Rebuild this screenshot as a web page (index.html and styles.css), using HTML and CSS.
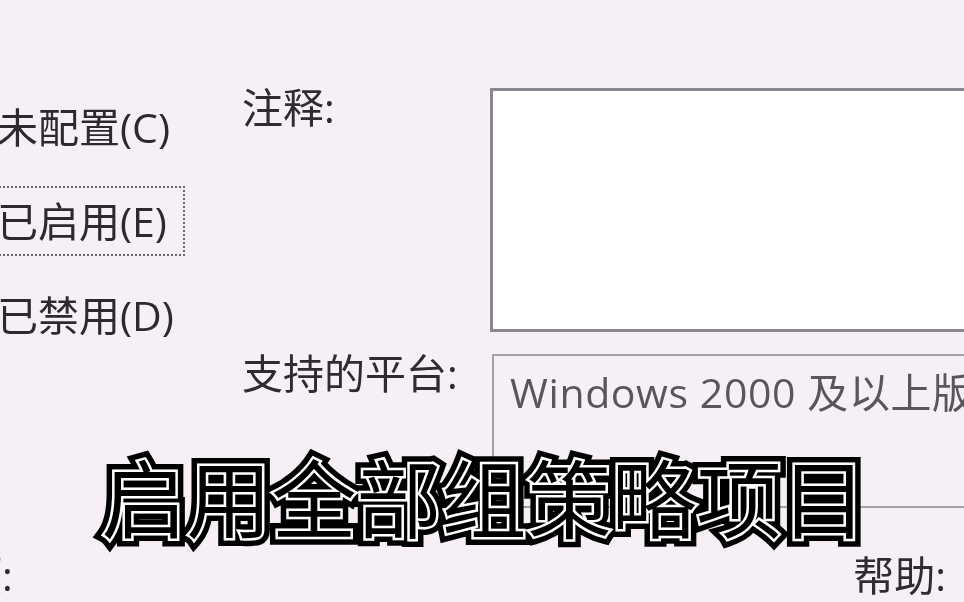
FILE: index.html
```html
<!DOCTYPE html>
<html lang="zh-CN">
<head>
<meta charset="utf-8">
<title>组策略设置</title>
<link rel="stylesheet" href="styles.css">
</head>
<body>
<div class="page">
  <div class="main">
    <div class="radios">
      <div class="radio r1">未配置(C)</div>
      <div class="radio focus">已启用(E)</div>
      <div class="radio r3">已禁用(D)</div>
    </div>
    <div class="fields">
      <div class="label">注释:</div>
      <div class="comment-box"></div>
      <div class="label">支持的平台:</div>
      <div class="platform-box">Windows 2000 及以上版本</div>
    </div>
  </div>
  <div class="bottom">
    <div class="label opt">选项:</div>
    <div class="label help">帮助:</div>
  </div>
  <div class="subtitle" data-text="启用全部组策略项目"><span class="subtitle-text">启用全部组策略项目</span></div>
</div>
</body>
</html>
```

FILE: styles.css
```css
html, body {
  margin: 0;
  padding: 0;
  background: #f6f0f6;
}

.page {
  position: relative;
  width: 964px;
  height: 602px;
  overflow: hidden;
  background: #f6f0f6;
  font-family: "Open Sans", "Noto Sans CJK SC", sans-serif;
  color: #2c2a2e;
}

.main {
  display: flex;
  filter: blur(0.6px);
}

.radios {
  width: 242px;
  flex: none;
  display: flex;
  flex-direction: column;
  padding-top: 103px;
}

.radio {
  font-size: 41px;
  line-height: 48px;
  height: 48px;
  margin-left: -3px;
  white-space: nowrap;
}

.radio.focus {
  margin-top: 35px;
  margin-left: -10px;
  width: 195px;
  height: 70px;
  box-sizing: border-box;
  border: 2px dotted #6a686c;
  border-left: none;
  padding-left: 7px;
  display: flex;
  align-items: center;
}

.radio.r3 {
  margin-top: 35px;
}

.fields {
  display: grid;
  grid-template-columns: 248px 560px;
  row-gap: 22px;
  padding-top: 88px;
  align-items: start;
}

.label {
  font-size: 41px;
  line-height: 38px;
  white-space: nowrap;
  color: #2e2c30;
}

.comment-box {
  height: 244px;
  box-sizing: border-box;
  background: #ffffff;
  border: 3px solid #8a888e;
  border-right: none;
}

.platform-box {
  height: 154px;
  box-sizing: border-box;
  margin-left: 2px;
  border: 2px solid #a3a1a6;
  border-right: none;
  padding: 12px 0 0 16px;
  font-size: 41px;
  line-height: 48px;
  letter-spacing: 0.6px;
  color: #58565b;
  white-space: nowrap;
  overflow: hidden;
}

.bottom {
  display: flex;
  justify-content: space-between;
  margin-top: 48px;
  filter: blur(0.6px);
}

.label.opt {
  margin-left: -80px;
}

.label.help {
  padding-right: 18px;
}

.subtitle {
  position: absolute;
  left: 0;
  right: 0;
  top: 449px;
  display: grid;
  justify-items: center;
  padding-left: 4px;
  font-family: "Noto Sans CJK SC", sans-serif;
  font-weight: 400;
  font-size: 85px;
  line-height: 92px;
  color: #000;
  white-space: nowrap;
}

.subtitle::before,
.subtitle::after {
  content: attr(data-text);
  grid-area: 1 / 1;
}

.subtitle::before {
  z-index: 0;
  -webkit-text-stroke: 16px #000;
}

.subtitle::after {
  z-index: 1;
  -webkit-text-stroke: 5px #fff;
}

.subtitle-text {
  grid-area: 1 / 1;
  z-index: 2;
}
```
